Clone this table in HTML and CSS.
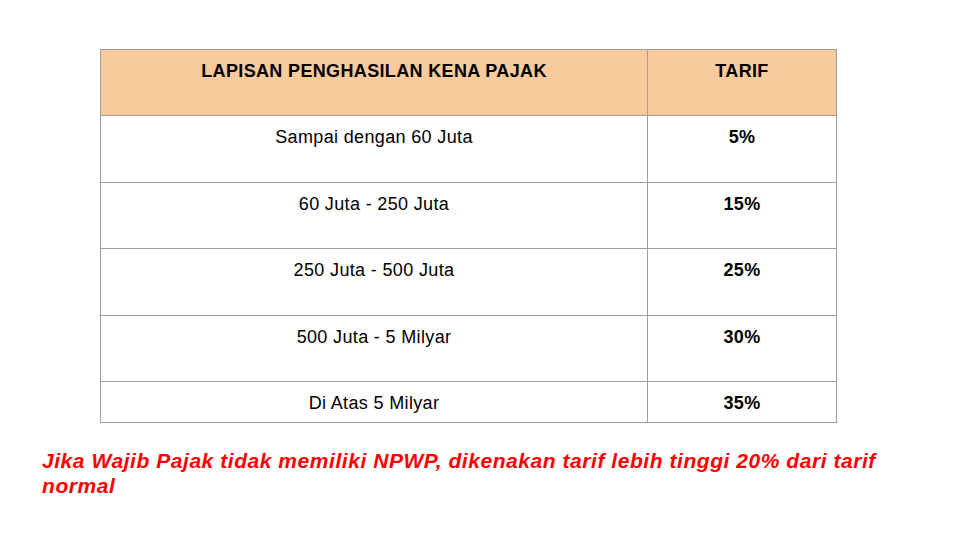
FILE: index.html
```html
<!DOCTYPE html>
<html lang="id">
  <head>
    <meta charset="UTF-8" />
    <meta name="viewport" content="width=device-width, initial-scale=1.0" />
    <title>Tarif Pajak Penghasilan</title>
    <link rel="stylesheet" href="styles.css">
  </head>
  <body>
    <div class="slide">
      <table class="tax-table">
        <thead>
          <tr class="head-row">
            <th class="col-range">LAPISAN PENGHASILAN KENA PAJAK</th>
            <th class="col-rate">TARIF</th>
          </tr>
        </thead>
        <tbody>
          <tr class="row">
            <td>Sampai dengan 60 Juta</td>
            <td class="rate">5%</td>
          </tr>
          <tr class="row">
            <td>60 Juta - 250 Juta</td>
            <td class="rate">15%</td>
          </tr>
          <tr class="row">
            <td>250 Juta - 500 Juta</td>
            <td class="rate">25%</td>
          </tr>
          <tr class="row">
            <td>500 Juta - 5 Milyar</td>
            <td class="rate">30%</td>
          </tr>
          <tr class="row last">
            <td>Di Atas 5 Milyar</td>
            <td class="rate">35%</td>
          </tr>
        </tbody>
      </table>

      <p class="note">Jika Wajib Pajak tidak memiliki NPWP, dikenakan tarif lebih tinggi 20% dari tarif normal</p>
    </div>
  </body>
</html>
```

FILE: styles.css
```css
:root {
  --head-bg: #f9cb9c;
  --line-color: #9e9e9e;
  --text-color: #000000;
  --note-color: #ff0000;
}

* {
  box-sizing: border-box;
}

body {
  margin: 0;
  padding: 0;
  background: #ffffff;
  font-family: "Liberation Sans", Arial, sans-serif;
  color: var(--text-color);
}

.slide {
  width: 960px;
  height: 540px;
  padding-top: 49px;
  overflow: hidden;
}

.tax-table {
  margin-left: 100px;
  width: 736px;
  border-collapse: collapse;
  table-layout: fixed;
}

.tax-table th,
.tax-table td {
  border: 1px solid var(--line-color);
  text-align: center;
  vertical-align: top;
  font-size: 18px;
  line-height: 21px;
  letter-spacing: 0.35px;
  padding: 11px 8px 0;
}

.col-range {
  width: 547px;
}

.col-rate {
  width: 189px;
}

.head-row {
  height: 66px;
  background: var(--head-bg);
}

.head-row th {
  font-weight: bold;
  padding-top: 11px;
}

.row {
  height: 66.5px;
}

.row.last {
  height: 41px;
}

.rate {
  font-weight: bold;
}

.note {
  margin: 25px 0 0 42px;
  width: 850px;
  color: var(--note-color);
  font-size: 21px;
  line-height: 25px;
  letter-spacing: 0.55px;
  font-weight: bold;
  font-style: italic;
}
```
